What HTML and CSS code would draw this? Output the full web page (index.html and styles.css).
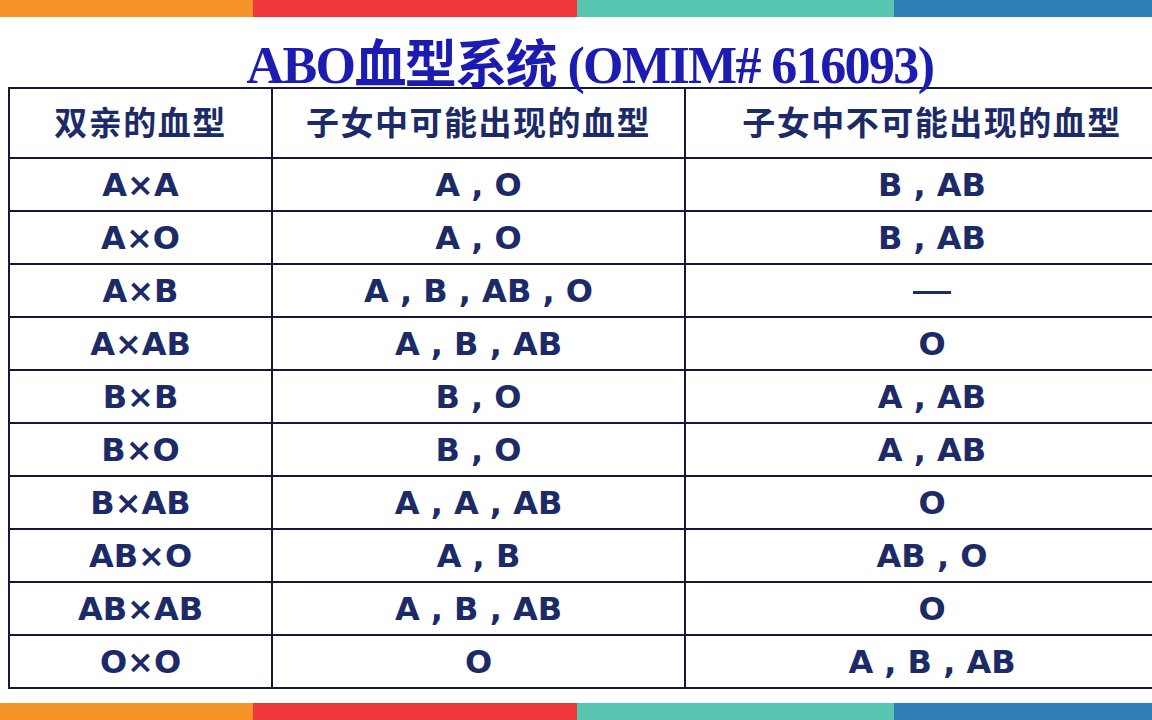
FILE: index.html
```html
<!DOCTYPE html>
<html lang="zh">
<head>
<meta charset="utf-8">
<title>ABO血型系统</title>
<link rel="stylesheet" href="styles.css">
</head>
<body>
<div class="page">
  <div class="bar">
    <span class="seg orange"></span><span class="seg red"></span><span class="seg teal"></span><span class="seg blue"></span>
  </div>
  <h1 class="title">ABO血型系统 (OMIM# 616093)</h1>
  <table class="grid">
    <colgroup><col class="c1"><col class="c2"><col class="c3"></colgroup>
    <thead>
      <tr><th>双亲的血型</th><th>子女中可能出现的血型</th><th>子女中不可能出现的血型</th></tr>
    </thead>
    <tbody>
      <tr><td>A×A</td><td>A , O</td><td>B , AB</td></tr>
      <tr><td>A×O</td><td>A , O</td><td>B , AB</td></tr>
      <tr><td>A×B</td><td>A , B , AB , O</td><td><span class="dash"></span></td></tr>
      <tr><td>A×AB</td><td>A , B , AB</td><td>O</td></tr>
      <tr><td>B×B</td><td>B , O</td><td>A , AB</td></tr>
      <tr><td>B×O</td><td>B , O</td><td>A , AB</td></tr>
      <tr><td>B×AB</td><td>A , A , AB</td><td>O</td></tr>
      <tr><td>AB×O</td><td>A , B</td><td>AB , O</td></tr>
      <tr><td>AB×AB</td><td>A , B , AB</td><td>O</td></tr>
      <tr><td>O×O</td><td>O</td><td>A , B , AB</td></tr>
    </tbody>
  </table>
  <div class="bar bottom">
    <span class="seg orange"></span><span class="seg red"></span><span class="seg teal"></span><span class="seg blue"></span>
  </div>
</div>
</body>
</html>
```

FILE: styles.css
```css
html, body {
  margin: 0;
  padding: 0;
  background: #ffffff;
  overflow: hidden;
}

.page {
  width: 1152px;
  height: 720px;
  overflow: hidden;
  display: flex;
  flex-direction: column;
}

.bar {
  display: flex;
  height: 17px;
  flex: none;
}

.bar.bottom {
  height: 18px;
  margin-top: 14px;
}

.seg { display: block; height: 100%; }
.orange { width: 253px; background: #f6942a; }
.red { width: 324px; background: #ee383c; }
.teal { width: 317px; background: #58c5b1; }
.blue { flex: 1; background: #2e7db4; }

.title {
  margin: 0;
  height: 70px;
  box-sizing: border-box;
  padding-top: 23px;
  padding-left: 28px;
  line-height: 52px;
  font-family: "Liberation Serif", "Noto Sans CJK SC", serif;
  font-weight: bold;
  font-size: 52px;
  letter-spacing: -1.6px;
  color: #1c1cb2;
  text-align: center;
  white-space: nowrap;
  position: relative;
  z-index: 1;
  flex: none;
}

.grid {
  margin-left: 8px;
  width: 1170px;
  border-collapse: collapse;
  table-layout: fixed;
  flex: none;
  font-family: "DejaVu Sans", "Noto Sans CJK SC", sans-serif;
  font-weight: bold;
  color: #1d2a68;
}

.c1 { width: 263px; }
.c2 { width: 413px; }
.c3 { width: 494px; }

.grid th, .grid td {
  border: 2px solid #15183a;
  text-align: center;
  vertical-align: middle;
  padding: 0;
  white-space: nowrap;
}

.grid th {
  height: 64px;
  font-size: 33px;
  letter-spacing: 1.5px;
  font-family: "Noto Sans CJK SC", sans-serif;
  font-weight: bold;
  padding-bottom: 4px;
}

.grid td {
  height: 51px;
  font-size: 32px;
}

.dash {
  display: inline-block;
  width: 38px;
  height: 3px;
  background: #1d2a68;
  vertical-align: middle;
}
```
